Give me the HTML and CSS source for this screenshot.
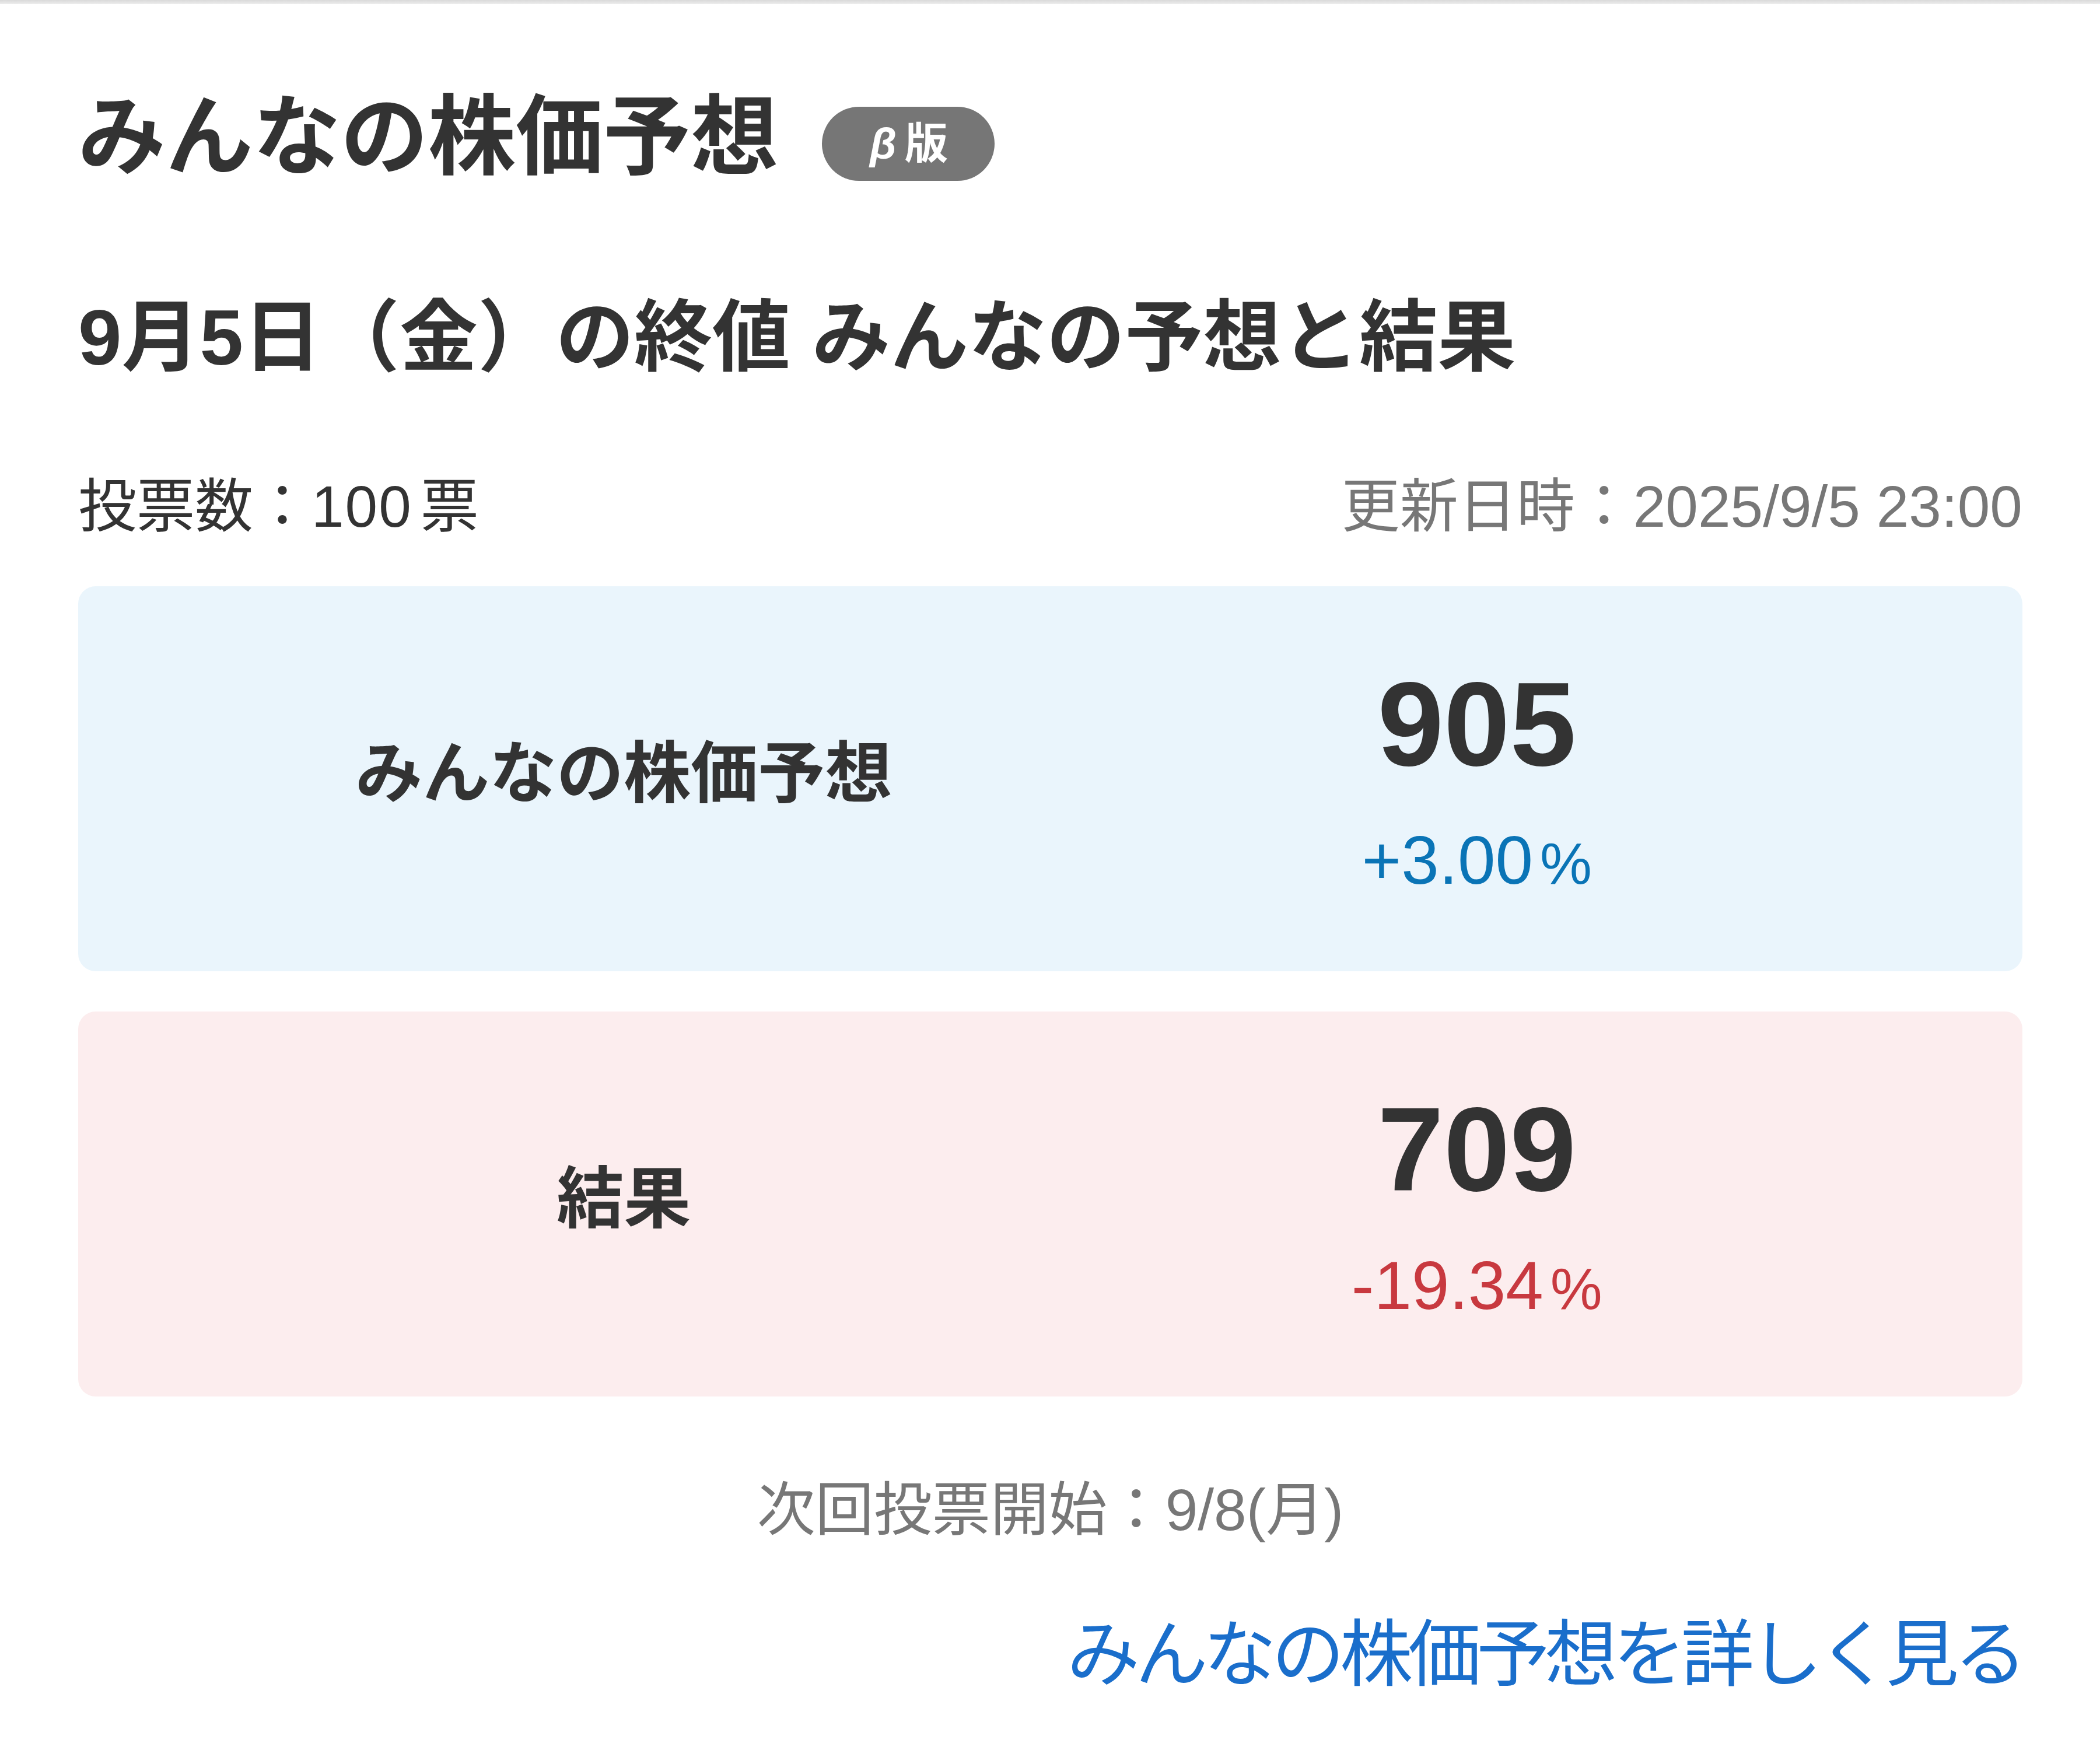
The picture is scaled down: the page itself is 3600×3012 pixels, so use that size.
FILE: index.html
```html
<!DOCTYPE html>
<html lang="ja">
<head>
<meta charset="utf-8">
<title>みんなの株価予想</title>
<link rel="stylesheet" href="styles.css">
</head>
<body>
<div class="topbar"></div>
<section class="card">
  <header class="head">
    <h1 class="title">みんなの株価予想</h1>
    <span class="badge"><span class="beta">β</span>版</span>
  </header>
  <h2 class="subtitle">9月5日（金）の終値 みんなの予想と結果</h2>
  <div class="meta">
    <span class="votes">投票数：<span class="num">100</span>票</span>
    <span class="updated">更新日時：2025/9/5 23:00</span>
  </div>
  <div class="panel panel-forecast">
    <div class="label">みんなの株価予想</div>
    <div class="value">
      <div class="price">905</div>
      <div class="change up">+3.00<span class="pct">%</span></div>
    </div>
  </div>
  <div class="panel panel-result">
    <div class="label">結果</div>
    <div class="value">
      <div class="price">709</div>
      <div class="change down">-19.34<span class="pct">%</span></div>
    </div>
  </div>
  <p class="next">次回投票開始：9/8(月)</p>
  <div class="more"><a class="more-link" href="#">みんなの株価予想を詳しく見る</a></div>
</section>
</body>
</html>
```

FILE: styles.css
```css
* {
  box-sizing: border-box;
  margin: 0;
  padding: 0;
}

body {
  margin: 0;
  background: #ffffff;
  font-family: "Liberation Sans", "Noto Sans CJK JP", sans-serif;
  color: #333333;
}

.topbar {
  height: 7px;
  background: linear-gradient(#d9d9d9, #ededed);
}

.card {
  padding: 153px 133px 0 134px;
}

.head {
  display: flex;
  align-items: flex-end;
  gap: 75px;
}

.title {
  font-size: 150px;
  line-height: 150px;
  font-weight: 700;
  color: #333333;
}

.badge {
  display: inline-flex;
  align-items: center;
  height: 127px;
  padding: 0 80px 0 82px;
  border-radius: 64px;
  background: #767676;
  color: #ffffff;
  font-size: 74px;
  line-height: 1;
  font-weight: 700;
}

.beta {
  font-style: italic;
  margin-right: 14px;
}

.subtitle {
  margin-top: 202px;
  font-size: 134px;
  line-height: 134px;
  font-weight: 700;
  color: #333333;
}

.meta {
  margin-top: 172px;
  display: flex;
  justify-content: space-between;
  font-size: 100px;
  line-height: 100px;
}

.votes {
  color: #333333;
}

.votes .num {
  letter-spacing: 2px;
  margin-right: 14px;
}

.updated {
  color: #777777;
}

.panel {
  height: 660px;
  border-radius: 30px;
  display: grid;
  grid-template-columns: 1fr 1fr;
  align-items: center;
  padding: 0 204px;
}

.panel-forecast {
  margin-top: 87px;
  background: #eaf5fc;
}

.panel-result {
  margin-top: 69px;
  background: #fcedee;
}

.label {
  text-align: center;
  font-size: 115px;
  line-height: 115px;
  font-weight: 700;
  color: #333333;
  padding-bottom: 18px;
}

.value {
  text-align: center;
  padding-top: 7px;
}

.price {
  font-size: 204px;
  line-height: 204px;
  font-weight: 700;
  color: #333333;
}

.change {
  margin-top: 74px;
  font-size: 116px;
  line-height: 116px;
}

.change.up {
  color: #0a74b6;
}

.change.down {
  color: #c8393f;
}

.pct {
  font-size: 100px;
  margin-left: 12px;
}

.next {
  margin-top: 144px;
  text-align: center;
  font-size: 100px;
  line-height: 100px;
  color: #777777;
}

.more {
  margin-top: 136px;
  text-align: right;
}

.more-link {
  font-size: 125px;
  line-height: 125px;
  letter-spacing: -8px;
  color: #1a6ecb;
  text-decoration: none;
}
```
